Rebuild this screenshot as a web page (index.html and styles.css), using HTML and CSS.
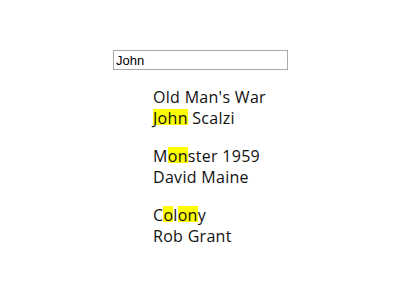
FILE: index.html
```html
<!DOCTYPE html>
<html>
<head>
<meta charset="utf-8">
<link rel="stylesheet" href="styles.css">
</head>
<body>
<div class="app">
  <input class="search" type="text" value="John">
  <ul class="results">
    <li class="book">
      <div class="title">Old Man's War</div>
      <div class="author"><mark>John</mark> Scalzi</div>
    </li>
    <li class="book">
      <div class="title">M<mark>on</mark>ster 1959</div>
      <div class="author">David Maine</div>
    </li>
    <li class="book">
      <div class="title">C<mark>o</mark>l<mark>on</mark>y</div>
      <div class="author">Rob Grant</div>
    </li>
  </ul>
</div>
</body>
</html>
```
FILE: styles.css
```css
html, body {
  margin: 0;
  padding: 0;
  background: #fff;
}
body {
  font-family: "Open Sans", "Noto Sans", sans-serif;
}
.app {
  width: 193px;
  margin: 0 auto;
  padding-top: 50px;
}
.search {
  display: block;
  box-sizing: border-box;
  width: 175px;
  height: 20px;
  margin: 0;
  padding: 1px 2px;
  border: 1px solid #a9a9a9;
  font-family: "Liberation Sans", Arial, sans-serif;
  font-size: 13px;
  color: #000;
  outline: none;
}
.results {
  list-style: none;
  margin: 17px 0 0;
  padding: 0 0 0 40px;
}
.book {
  font-size: 16px;
  line-height: 21px;
  letter-spacing: 0.3px;
  color: #111;
  margin-bottom: 17px;
}
mark {
  color: inherit;
  background: linear-gradient(#ffff00, #ffff00) 0 2px / 100% 16px no-repeat;
}
```
